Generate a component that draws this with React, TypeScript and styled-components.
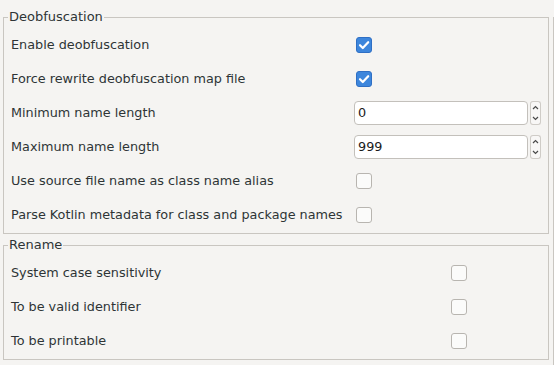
import styled, { createGlobalStyle } from "styled-components";

const GlobalStyle = createGlobalStyle`
  html, body {
    margin: 0;
    padding: 0;
    background: #f5f4f2;
  }
  body {
    font-family: "DejaVu Sans", "Liberation Sans", sans-serif;
    font-size: 12.8px;
    color: #2e3436;
  }
`;

interface Option {
  label: string;
  kind: "check" | "spin";
  checked?: boolean;
  value?: string;
}

const deobfOptions: Option[] = [
  { label: "Enable deobfuscation", kind: "check", checked: true },
  { label: "Force rewrite deobfuscation map file", kind: "check", checked: true },
  { label: "Minimum name length", kind: "spin", value: "0" },
  { label: "Maximum name length", kind: "spin", value: "999" },
  { label: "Use source file name as class name alias", kind: "check" },
  { label: "Parse Kotlin metadata for class and package names", kind: "check" },
];

const renameOptions: Option[] = [
  { label: "System case sensitivity", kind: "check" },
  { label: "To be valid identifier", kind: "check" },
  { label: "To be printable", kind: "check" },
];

function CheckBox({ checked }: { checked?: boolean }) {
  return (
    <Box $checked={checked}>
      {checked && (
        <svg width="16" height="16" viewBox="0 0 16 16">
          <path
            d="M4 8.2 L6.8 11 L12.2 5.2"
            fill="none"
            stroke="#fff"
            strokeWidth="2.2"
            strokeLinecap="round"
            strokeLinejoin="round"
          />
        </svg>
      )}
    </Box>
  );
}

function Spinner({ value }: { value?: string }) {
  return (
    <SpinWrap>
      <Field>{value}</Field>
      <Arrows>
        <ArrowBtn>
          <svg width="7" height="5" viewBox="0 0 7 5">
            <path d="M1 4 L3.5 1.5 L6 4" fill="none" stroke="#4a4a4a" strokeWidth="1.2" />
          </svg>
        </ArrowBtn>
        <ArrowBtn>
          <svg width="7" height="5" viewBox="0 0 7 5">
            <path d="M1 1 L3.5 3.5 L6 1" fill="none" stroke="#4a4a4a" strokeWidth="1.2" />
          </svg>
        </ArrowBtn>
      </Arrows>
    </SpinWrap>
  );
}

function Group({ title, options, labelWidth }: { title: string; options: Option[]; labelWidth: number }) {
  return (
    <Fieldset>
      <Legend>{title}</Legend>
      {options.map((o) => (
        <Row key={o.label} $labelWidth={labelWidth}>
          <Label>{o.label}</Label>
          {o.kind === "check" ? <CheckBox checked={o.checked} /> : <Spinner value={o.value} />}
        </Row>
      ))}
    </Fieldset>
  );
}

export default function App() {
  return (
    <>
      <GlobalStyle />
      <Page>
        <Column>
          <Group title="Deobfuscation" options={deobfOptions} labelWidth={343} />
          <Group title="Rename" options={renameOptions} labelWidth={438} />
        </Column>
        <EdgeLine />
      </Page>
    </>
  );
}

const Page = styled.div`
  display: flex;
  width: 554px;
  height: 365px;
  box-sizing: border-box;
  padding: 9px 0 0 3px;
  overflow: hidden;
`;

const Column = styled.div`
  width: 546px;
  display: flex;
  flex-direction: column;
  gap: 3px;
`;

const EdgeLine = styled.div`
  width: 4px;
  margin-top: 8px;
  border-right: 1px solid #c9c6c1;
`;

const Fieldset = styled.fieldset`
  margin: 0;
  padding: 3px 0 1px 7px;
  border: 1px solid #c9c6c1;
  min-width: 0;
`;

const Legend = styled.legend`
  margin-left: -3px;
  padding: 0 1px;
  font-size: 13px;
  line-height: 16px;
  color: #2e3436;
`;

const Row = styled.div<{ $labelWidth: number }>`
  display: grid;
  grid-template-columns: ${(p) => p.$labelWidth}px auto;
  align-items: center;
  height: 34px;
`;

const Label = styled.span`
  white-space: nowrap;
  line-height: 16px;
`;

const Box = styled.span<{ $checked?: boolean }>`
  display: block;
  margin-left: 2px;
  width: 16px;
  height: 16px;
  box-sizing: border-box;
  border-radius: 3px;
  border: 1px solid ${(p) => (p.$checked ? "#2f6fc4" : "#b8b5b0")};
  background: ${(p) => (p.$checked ? "#3d86dc" : "#fbfbfa")};
  svg {
    display: block;
    margin: -1px;
  }
`;

const SpinWrap = styled.div`
  display: flex;
  align-items: stretch;
  gap: 2px;
  height: 24px;
`;

const Field = styled.div`
  width: 174px;
  box-sizing: border-box;
  border: 1px solid #c3c0bb;
  border-radius: 4px;
  background: #fff;
  padding: 0 3px;
  line-height: 22px;
  color: #1a1a1a;
`;

const Arrows = styled.div`
  display: flex;
  flex-direction: column;
  width: 11px;
`;

const ArrowBtn = styled.div`
  flex: 1;
  display: flex;
  align-items: center;
  justify-content: center;
  box-sizing: border-box;
  border: 1px solid #cfccc7;
  background: #f8f7f6;
  &:first-child {
    border-radius: 3px 3px 0 0;
    border-bottom: none;
  }
  &:last-child {
    border-radius: 0 0 3px 3px;
    border-top: none;
  }
`;
